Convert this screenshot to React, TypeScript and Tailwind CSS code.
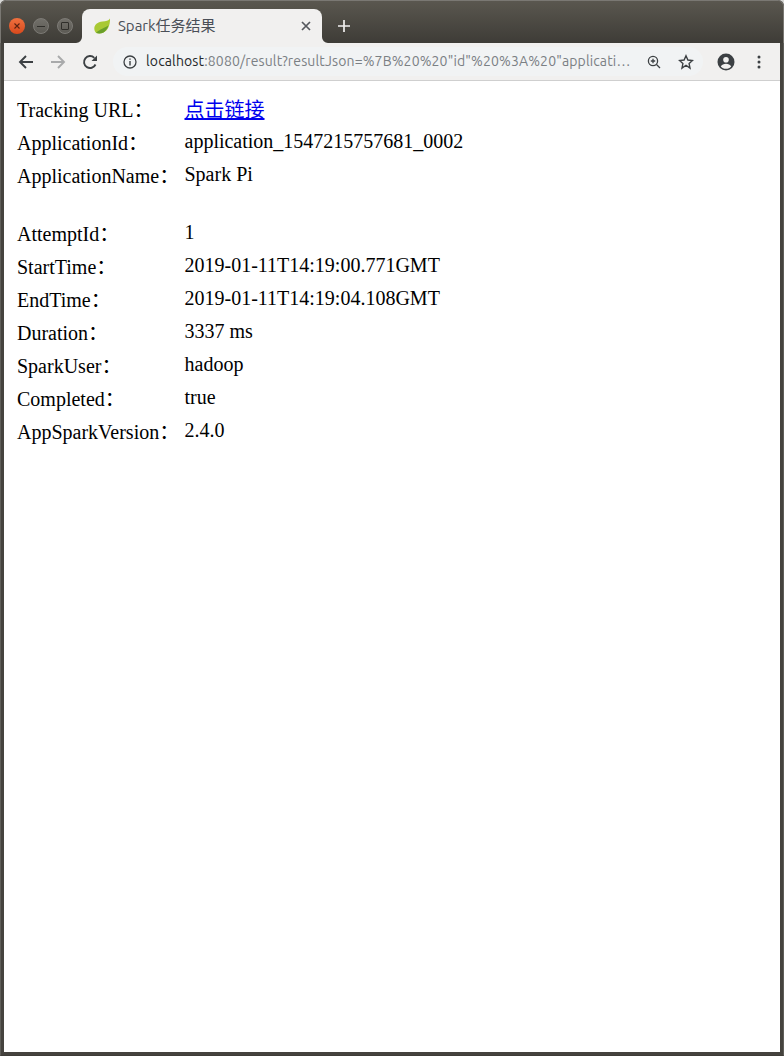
import React from "react";

const rows1 = [
  ["ApplicationId", "application_1547215757681_0002"],
  ["ApplicationName", "Spark Pi"],
];
const rows2 = [
  ["AttemptId", "1"],
  ["StartTime", "2019-01-11T14:19:00.771GMT"],
  ["EndTime", "2019-01-11T14:19:04.108GMT"],
  ["Duration", "3337 ms"],
  ["SparkUser", "hadoop"],
  ["Completed", "true"],
  ["AppSparkVersion", "2.4.0"],
];
const serif = "font-['Liberation_Serif','Noto_Sans_CJK_SC',serif]";

function Row({ label, children, link }: { label: string; children: React.ReactNode; link?: boolean }) {
  return (
    <div className="flex h-[33px] text-[20px] leading-[33px] text-black">
      <div className="w-[167.5px] shrink-0 whitespace-nowrap pt-[1px]">{label}：</div>
      <div className={link ? "mt-[1px] whitespace-nowrap" : "mt-[-1px] whitespace-nowrap"}>{children}</div>
    </div>
  );
}

export default function App() {
  return (
    <div className="h-[1056px] w-[784px] overflow-hidden bg-[#d8d8d6] font-['Ubuntu','Noto_Sans','Noto_Sans_CJK_SC',sans-serif]">
      <div className="flex h-[1056px] flex-col overflow-hidden rounded-t-[6px] bg-[#45433e]">
        <div className="flex h-[43px] shrink-0 items-end rounded-t-[6px] border-x border-t border-[#7a7873] bg-gradient-to-b from-[#5a574f] to-[#3e3c37] pl-[8px]">
          <div className="mb-[9px] flex items-center gap-[8px]">
            <div className="flex h-[16px] w-[16px] items-center justify-center rounded-full bg-gradient-to-b from-[#f0703e] to-[#d8491c]">
              <svg width="8" height="8" viewBox="0 0 8 8"><path d="M1.500 1.500l5 5M6.500 1.500l-5 5" stroke="#5c2310" strokeWidth="1.100" /></svg>
            </div>
            <div className="flex h-[16px] w-[16px] items-center justify-center rounded-full border border-[#7d7b76] bg-gradient-to-b from-[#72706a] to-[#5c5a54]">
              <div className="h-[1px] w-[8px] bg-[#2f2e2a]" />
            </div>
            <div className="flex h-[16px] w-[16px] items-center justify-center rounded-full border border-[#7d7b76] bg-gradient-to-b from-[#72706a] to-[#5c5a54]">
              <div className="h-[8px] w-[8px] rounded-[1px] border border-[#2f2e2a]" />
            </div>
          </div>
          <div className="relative ml-[9px] flex h-[34px] w-[240px] items-center rounded-t-[8px] bg-[#f1f0ef] pl-[11px] pr-[11px]">
            <svg width="6" height="6" viewBox="0 0 6 6" className="absolute bottom-0 left-[-6px]"><path d="M6 0V6H0A6 6 0 0 0 6 0z" fill="#f1f0ef" /></svg>
            <svg width="6" height="6" viewBox="0 0 6 6" className="absolute bottom-0 right-[-6px]"><path d="M0 0V6H6A6 6 0 0 1 0 0z" fill="#f1f0ef" /></svg>
            <svg width="18" height="18" viewBox="0 0 18 18" className="shrink-0">
              <path d="M17 1.500C15.500 3.800 13 4.300 9.500 4.600 4.500 5 1.300 8 1.300 11.500c0 1.800.7 3.400 1.900 4.500 2.300.8 5 .6 7.300-.5C14.800 13.500 17.300 8 17 1.500z" fill="#a9c934" />
              <path d="M3.200 16C5 13.500 9 11.800 15.500 8.500c-1 3-2.800 5.600-5 7-2.300 1.100-5 1.300-7.300.5z" fill="#6a9f2a" />
            </svg>
            <span className="ml-[7px] whitespace-nowrap text-[15px] text-[#4a4f57]">Spark任务结果</span>
            <svg width="10" height="10" viewBox="0 0 10 10" className="ml-auto"><path d="M1 1l8 8M9 1l-8 8" stroke="#55585d" strokeWidth="1.700" /></svg>
          </div>
          <svg width="12" height="12" viewBox="0 0 12 12" className="mb-[11px] ml-[16px]"><path d="M6 0v12M0 6h12" stroke="#f1f0ef" strokeWidth="1.700" /></svg>
        </div>
        <div className="flex min-h-0 flex-1 flex-col border-x border-b border-x-[#5f5e59] border-b-[#3f3d38] px-[3px] pb-[3px]">
          <div className="flex h-[38px] shrink-0 items-center border-b border-[#cfcfcf] bg-[#f1f0ef] pl-[14px]">
            <svg width="16" height="16" viewBox="0 0 16 16"><path d="M15 8H2M8 2L2 8l6 6" fill="none" stroke="#3c4043" strokeWidth="1.900" /></svg>
            <svg width="16" height="16" viewBox="0 0 16 16" className="ml-[16px]"><path d="M1 8h13M8 2l6 6-6 6" fill="none" stroke="#a9aaab" strokeWidth="1.900" /></svg>
            <svg width="16" height="16" viewBox="0 0 16 16" className="ml-[16px]"><path d="M13.500 10.500A6 6 0 1 1 12.300 3.800" fill="none" stroke="#3c4043" strokeWidth="1.900" /><path d="M15 1.500V7H9.500z" fill="#3c4043" /></svg>
            <div className="ml-[15px] flex h-[29px] w-[590px] shrink-0 items-center rounded-full bg-[#f1f3f4] pl-[10px] text-[14px]">
              <svg width="14" height="14" viewBox="0 0 14 14" className="shrink-0"><circle cx="7" cy="7" r="6" fill="none" stroke="#3c4043" strokeWidth="1.300" /><path d="M7 6v4.500M7 3.500v1.300" stroke="#3c4043" strokeWidth="1.400" /></svg>
              <div className="ml-[9px] w-[486px] shrink-0 truncate tracking-[0.14px] text-[#7b8084]"><span className="text-[#24272a]">localhost</span>:8080/result?resultJson=%7B%20%20"id"%20%3A%20"applicati…</div>
              <svg width="14" height="14" viewBox="0 0 14 14" className="ml-[15px] shrink-0"><circle cx="6" cy="6" r="4.600" fill="none" stroke="#3c4043" strokeWidth="1.300" /><path d="M9.500 9.500L13 13M6 3.800v4.400M3.800 6h4.400" stroke="#3c4043" strokeWidth="1.300" /></svg>
              <svg width="16" height="16" viewBox="0 0 16 16" className="ml-[17px] shrink-0"><path d="M8 1.800l1.900 4.200 4.600.5-3.400 3.100.9 4.500L8 11.300l-4 2.800.9-4.500L1.500 6.500 6.100 6z" fill="none" stroke="#3c4043" strokeWidth="1.400" /></svg>
            </div>
            <svg width="18" height="18" viewBox="0 0 18 18" className="ml-[14px] shrink-0"><circle cx="9" cy="9" r="8.500" fill="#3c4043" /><circle cx="9" cy="6.800" r="2.800" fill="#f1f0ef" /><path d="M3.800 13.500c1-2 3-2.800 5.200-2.800s4.200.8 5.200 2.800c-1.300 1.500-3.100 2.300-5.200 2.300s-3.900-.8-5.200-2.300z" fill="#f1f0ef" /></svg>
            <svg width="4" height="14" viewBox="0 0 4 14" className="ml-[22px] shrink-0"><circle cx="2" cy="2" r="1.500" fill="#3c4043" /><circle cx="2" cy="7" r="1.500" fill="#3c4043" /><circle cx="2" cy="12" r="1.500" fill="#3c4043" /></svg>
          </div>
          <div className="min-h-0 flex-1 bg-white">
            <div className={`pl-[13px] pt-[12px] ${serif}`}>
              <Row label="Tracking URL" link><a href="#" className="text-[#0000ee] underline">点击链接</a></Row>
              {rows1.map(([a, b]) => <Row key={a} label={a}>{b}</Row>)}
              <div className="h-[25px]" />
              {rows2.map(([a, b]) => <Row key={a} label={a}>{b}</Row>)}
            </div>
          </div>
        </div>
      </div>
    </div>
  );
}
